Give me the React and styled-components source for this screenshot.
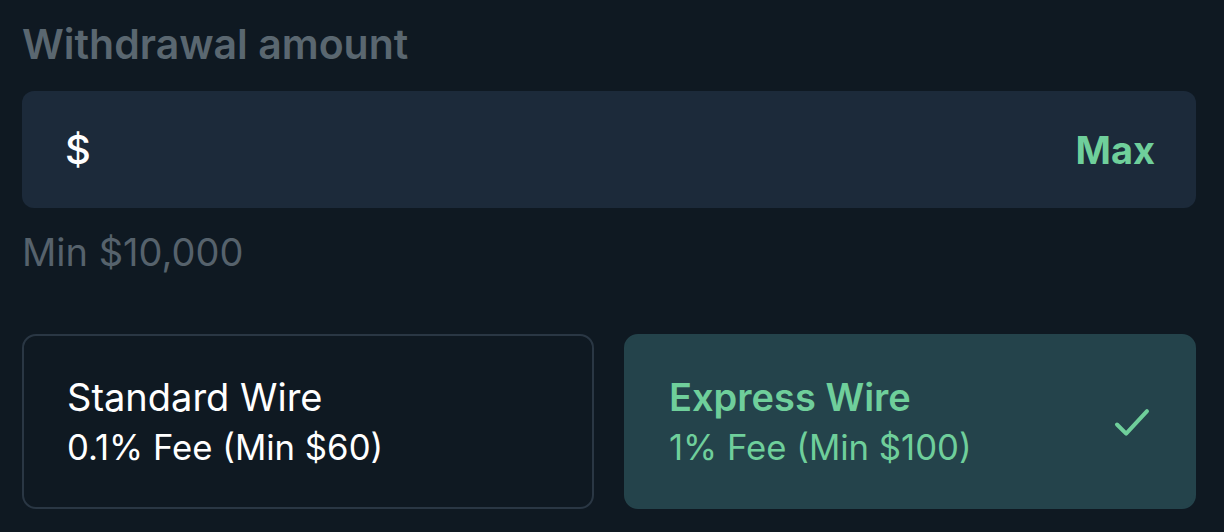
import React from "react";
import styled, { createGlobalStyle } from "styled-components";

const Global = createGlobalStyle`
  html, body { margin: 0; padding: 0; background: #0f1922; }
  body { font-family: Inter, "Noto Sans", sans-serif; -webkit-font-smoothing: antialiased; }
`;

const Page = styled.div`
  width: 1224px;
  height: 532px;
  box-sizing: border-box;
  padding: 20px 28px 0 22px;
  background: #0f1922;
  display: flex;
  flex-direction: column;
`;

const Label = styled.div`
  font-size: 41px;
  font-weight: 600;
  color: #5a6770;
  line-height: 48px;
`;

const InputBox = styled.div`
  margin-top: 23px;
  height: 117px;
  border-radius: 12px;
  background: #1c2a3a;
  display: flex;
  align-items: center;
  justify-content: space-between;
  padding: 0 41px 0 43px;
`;

const Dollar = styled.span`
  font-size: 40px;
  font-weight: 500;
  color: #ffffff;
`;

const Max = styled.span`
  font-size: 38px;
  font-weight: 700;
  color: #6fcf9b;
`;

const Hint = styled.div`
  margin-top: 20px;
  font-size: 38px;
  font-weight: 400;
  color: #56626c;
  line-height: 48px;
`;

const Options = styled.div`
  margin-top: 58px;
  display: grid;
  grid-template-columns: 1fr 1fr;
  gap: 30px;
`;

const Card = styled.div`
  height: 175px;
  box-sizing: border-box;
  border-radius: 14px;
  border: 2px solid ${(p) => (p.$active ? "#24434b" : "#2a3744")};
  background: ${(p) => (p.$active ? "#24434b" : "transparent")};
  color: ${(p) => (p.$active ? "#6fcf9b" : "#ffffff")};
  display: flex;
  align-items: center;
  justify-content: space-between;
  padding: 0 42px 0 43px;
`;

const Texts = styled.div`
  display: flex;
  flex-direction: column;
  gap: 2px;
`;

const Title = styled.div`
  font-size: 38px;
  font-weight: ${(p) => (p.$active ? 600 : 400)};
  line-height: 48px;
`;

const Sub = styled.div`
  font-size: 34.7px;
  font-weight: 400;
  line-height: 48px;
`;

const Check = () => (
  <svg width="40" height="40" viewBox="0 0 24 24" fill="none" stroke="#6fcf9b" strokeWidth="2.4" strokeLinecap="round" strokeLinejoin="round">
    <path d="M3 13.5 L8.5 19 L21 5.5" />
  </svg>
);

export default function App() {
  return (
    <>
      <Global />
      <Page>
        <Label>Withdrawal amount</Label>
        <InputBox>
          <Dollar>$</Dollar>
          <Max>Max</Max>
        </InputBox>
        <Hint>Min $10,000</Hint>
        <Options>
          <Card>
            <Texts>
              <Title>Standard Wire</Title>
              <Sub>0.1% Fee (Min $60)</Sub>
            </Texts>
          </Card>
          <Card $active>
            <Texts>
              <Title $active>Express Wire</Title>
              <Sub>1% Fee (Min $100)</Sub>
            </Texts>
            <Check />
          </Card>
        </Options>
      </Page>
    </>
  );
}
